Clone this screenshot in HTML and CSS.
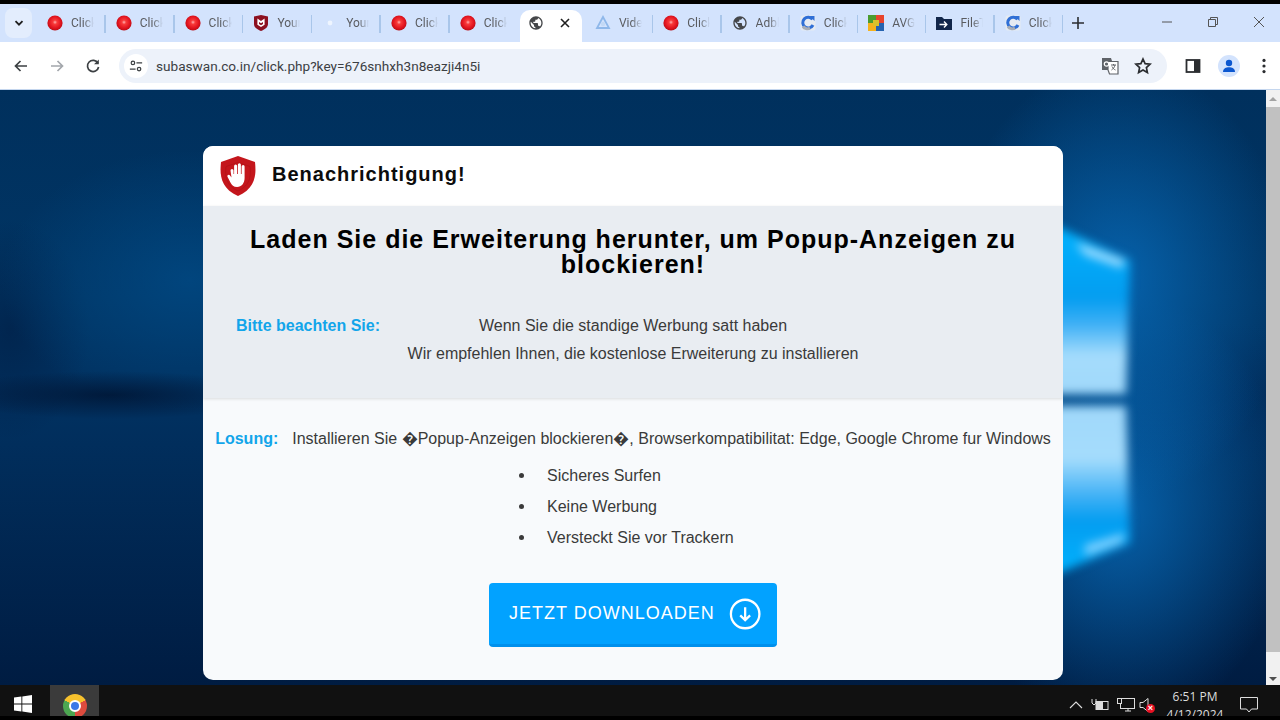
FILE: index.html
```html
<!DOCTYPE html>
<html lang="de">
<head>
<meta charset="utf-8">
<title>subaswan.co.in</title>
<link rel="stylesheet" href="styles.css">
</head>
<body>
<svg class="defs" width="0" height="0" aria-hidden="true">
  <defs>
    <radialGradient id="redball" cx="0.5" cy="0.45" r="0.55">
      <stop offset="0" stop-color="#ffb0b0"/>
      <stop offset="0.25" stop-color="#f83a3a"/>
      <stop offset="0.7" stop-color="#e2141f"/>
      <stop offset="1" stop-color="#b80d16"/>
    </radialGradient>
    <symbol id="red" viewBox="0 0 16 16"><circle cx="8" cy="8" r="7.6" fill="url(#redball)"/></symbol>
    <symbol id="globe" viewBox="0 0 24 24"><path fill="#45474a" d="M12 2C6.48 2 2 6.48 2 12s4.48 10 10 10 10-4.48 10-10S17.52 2 12 2zm-1 17.93c-3.95-.49-7-3.85-7-7.93 0-.62.08-1.21.21-1.79L9 15v1c0 1.1.9 2 2 2v1.93zm6.9-2.54c-.26-.81-1-1.39-1.9-1.39h-1v-3c0-.55-.45-1-1-1H8v-2h2c.55 0 1-.45 1-1V7h2c1.1 0 2-.9 2-2v-.41c2.93 1.19 5 4.06 5 7.41 0 2.08-.8 3.97-2.1 5.39z"/></symbol>
    <symbol id="mcafee" viewBox="0 0 16 16"><path fill="#8c1020" d="M1 1.5 8 0l7 1.5V9c0 3.5-3.5 5.6-7 7-3.5-1.4-7-3.5-7-7z"/><path fill="#fff" d="M4.4 3.6 8 6l3.6-2.4v6.2L8 12 4.4 9.8zM6 7v2l2 1.2 2-1.2V7L8 8.2z"/></symbol>
    <symbol id="dot" viewBox="0 0 16 16"><circle cx="8" cy="8" r="2.4" fill="#eef5ff"/></symbol>
    <symbol id="vid" viewBox="0 0 16 16"><path fill="none" stroke="#8fb8ea" stroke-width="1.8" d="M8 2 14 13H2z"/><circle cx="8" cy="9" r="2.2" fill="#c3d9f5"/></symbol>
    <symbol id="recap" viewBox="0 0 16 16"><rect x="0.5" y="0.5" width="15" height="15" rx="2" fill="#e6ebf2"/><path fill="none" stroke="#2f6fd6" stroke-width="3" d="M12.5 4.4A5.4 5.4 0 1 0 13 10"/><path fill="#2f6fd6" d="M9.5 1h5v5z"/><path fill="none" stroke="#a8adb5" stroke-width="3" d="M3 11.5A5.6 5.6 0 0 0 10 13.2"/></symbol>
    <symbol id="avg" viewBox="0 0 16 16"><path fill="#e8442c" d="M8 0h8v8H8z"/><path fill="#f6b21b" d="M0 8h8v8H0z"/><path fill="#4a9c2f" d="M0 0h8v8H0z"/><path fill="#2563b0" d="M8 8h8v8H8z"/><path fill="#d9c22b" d="M5 5h6v6H5z"/></symbol>
    <symbol id="file" viewBox="0 0 16 16"><path fill="#12264a" d="M0 2h6l2 2h8v11H0z"/><path fill="none" stroke="#fff" stroke-width="1.4" d="M3.5 9.5h7M8 6.6l2.8 2.9L8 12.4"/></symbol>
  </defs>
</svg>

<div class="topbar"></div>

<div class="tabstrip">
  <button class="tabmenu" type="button"><svg viewBox="0 0 12 12" width="12" height="12"><path d="M2.5 4.2 6 7.7l3.5-3.5" fill="none" stroke="#1f1f1f" stroke-width="1.8"/></svg></button>
  <div class="tabs">
    <div class="tab"><svg class="fav"><use href="#red"/></svg><span class="tabname">Click</span></div>
    <div class="tab"><svg class="fav"><use href="#red"/></svg><span class="tabname">Click</span></div>
    <div class="tab"><svg class="fav"><use href="#red"/></svg><span class="tabname">Click</span></div>
    <div class="tab"><svg class="fav"><use href="#mcafee"/></svg><span class="tabname">Your</span></div>
    <div class="tab"><svg class="fav"><use href="#dot"/></svg><span class="tabname">Your</span></div>
    <div class="tab"><svg class="fav"><use href="#red"/></svg><span class="tabname">Click</span></div>
    <div class="tab nosep"><svg class="fav"><use href="#red"/></svg><span class="tabname">Click</span></div>
    <div class="tab active"><svg class="fav"><use href="#globe"/></svg><svg class="tabclose" viewBox="0 0 10 10" width="10" height="10"><path d="M1 1l8 8M9 1 1 9" stroke="#1f1f1f" stroke-width="1.6"/></svg></div>
    <div class="tab"><svg class="fav"><use href="#vid"/></svg><span class="tabname">Video</span></div>
    <div class="tab"><svg class="fav"><use href="#red"/></svg><span class="tabname">Click</span></div>
    <div class="tab"><svg class="fav"><use href="#globe"/></svg><span class="tabname">Adbl</span></div>
    <div class="tab"><svg class="fav"><use href="#recap"/></svg><span class="tabname">Click</span></div>
    <div class="tab"><svg class="fav"><use href="#avg"/></svg><span class="tabname">AVG</span></div>
    <div class="tab"><svg class="fav"><use href="#file"/></svg><span class="tabname">FileT</span></div>
    <div class="tab"><svg class="fav"><use href="#recap"/></svg><span class="tabname">Click</span></div>
  </div>
  <svg class="newtab" viewBox="0 0 12 12" width="12" height="12"><path d="M6 0v12M0 6h12" stroke="#2b2d30" stroke-width="1.6"/></svg>
  <div class="winctl">
    <svg viewBox="0 0 12 12" width="12" height="12"><path d="M1 6h10" stroke="#555" stroke-width="1"/></svg>
    <svg viewBox="0 0 12 12" width="12" height="12"><path d="M1.5 3.5h7v7h-7zM3.5 3.5v-2h7v7h-2" fill="none" stroke="#555" stroke-width="1"/></svg>
    <svg viewBox="0 0 12 12" width="12" height="12"><path d="M1 1l10 10M11 1 1 11" stroke="#555" stroke-width="1"/></svg>
  </div>
</div>

<div class="toolbar">
  <svg class="navicon" viewBox="0 0 16 16" width="16" height="16"><path d="M14 8H2.5M7.5 3 2.5 8l5 5" fill="none" stroke="#3c4043" stroke-width="1.7"/></svg>
  <svg class="navicon" viewBox="0 0 16 16" width="16" height="16"><path d="M2 8h11.5M8.5 3l5 5-5 5" fill="none" stroke="#a3a7ac" stroke-width="1.7"/></svg>
  <svg class="navicon" viewBox="0 0 16 16" width="16" height="16"><path d="M13 5.2A5.6 5.6 0 1 0 13.6 9" fill="none" stroke="#3c4043" stroke-width="1.7"/><path d="M13.8 1.5v4.8H9z" fill="#3c4043"/></svg>
  <div class="omnibox">
    <span class="sitebtn"><svg viewBox="0 0 16 16" width="14" height="14"><circle cx="4.5" cy="4.5" r="2" fill="none" stroke="#3c4043" stroke-width="1.4"/><path d="M8.5 4.5H15M1 11.5h6.5" stroke="#3c4043" stroke-width="1.5"/><circle cx="11.5" cy="11.5" r="2" fill="none" stroke="#3c4043" stroke-width="1.4"/></svg></span>
    <span class="url">subaswan.co.in/click.php?key=676snhxh3n8eazji4n5i</span>
    <span class="omniicons">
      <svg viewBox="0 0 18 18" width="18" height="18"><path d="M1 1h9l1.2 3.4V13H1z" fill="#5f6368"/><path d="M7 4.5h10V17H8.5L7 13z" fill="#fff" stroke="#5f6368" stroke-width="1.2"/><circle cx="5.5" cy="7" r="2.2" fill="none" stroke="#fff" stroke-width="1.2"/><path d="M10 8h5M12.5 7v1.4M14 8c-.5 2.5-2 4-3.5 5M11 9.5c.7 1.5 2 3 3.5 3.5" fill="none" stroke="#5f6368" stroke-width="1"/></svg>
      <svg viewBox="0 0 18 18" width="18" height="18"><path d="M9 2l2.1 4.6 5 .6-3.7 3.4 1 4.9L9 13l-4.4 2.5 1-4.9-3.700-3.400 5-.6z" fill="none" stroke="#2b2d30" stroke-width="1.7"/></svg>
    </span>
  </div>
  <div class="tools">
    <svg viewBox="0 0 16 16" width="16" height="16"><rect x="1.5" y="2" width="13" height="12" fill="none" stroke="#2b2d30" stroke-width="1.8"/><rect x="9" y="2" width="5.5" height="12" fill="#2b2d30"/></svg>
    <span class="avatar"><svg viewBox="0 0 16 16" width="16" height="16"><circle cx="8" cy="5" r="3.2" fill="#0b57d0"/><path d="M2 14c0-3.4 3-4.8 6-4.8s6 1.4 6 4.8z" fill="#0b57d0"/></svg></span>
    <svg viewBox="0 0 4 16" width="4" height="16"><circle cx="2" cy="2.4" r="1.6" fill="#2b2d30"/><circle cx="2" cy="8" r="1.6" fill="#2b2d30"/><circle cx="2" cy="13.6" r="1.6" fill="#2b2d30"/></svg>
  </div>
</div>

<div class="viewport">
  <main class="page">
    <svg class="wall-logo" viewBox="0 0 1266 595" width="1266" height="595" aria-hidden="true">
      <defs>
        <linearGradient id="paneTop" x1="0" y1="130" x2="0" y2="304" gradientUnits="userSpaceOnUse">
          <stop offset="0" stop-color="#00b4ff"/>
          <stop offset="0.45" stop-color="#049df0"/>
          <stop offset="0.6" stop-color="#3fb0f5"/>
          <stop offset="0.78" stop-color="#a5dcfc"/>
          <stop offset="1" stop-color="#a0d8fa"/>
        </linearGradient>
        <linearGradient id="paneBot" x1="0" y1="316" x2="0" y2="490" gradientUnits="userSpaceOnUse">
          <stop offset="0" stop-color="#a0d8fa"/>
          <stop offset="0.3" stop-color="#a5dcfc"/>
          <stop offset="0.52" stop-color="#3fb0f5"/>
          <stop offset="0.66" stop-color="#049df0"/>
          <stop offset="1" stop-color="#00b4ff"/>
        </linearGradient>
      </defs>
      <polygon points="1000,110 1130,170 1126,304 1000,304" fill="url(#paneTop)"/>
      <polygon points="1000,316 1126,316 1130,453 1000,508" fill="url(#paneBot)"/>
      <polygon points="1075,152 1125,170 1122,178 1085,165" fill="#9fdcff"/>
      <polygon points="1085,455 1125,443 1122,453 1085,466" fill="#7fd0ff"/>
    </svg>
    <section class="card">
      <header class="card-head">
        <svg class="shield" viewBox="0 0 36 40" width="36" height="40">
          <path d="M18 0 35 6c1.4 13 .5 26-17 34C.5 32-.4 19 1 6z" fill="#c4161c"/>
          <path d="M18 6.5 30 10.5c.9 9.800.4 18.500-12 24.500C5.600 29 5.100 20.300 6 10.500z" fill="#c4161c" stroke="#a81015" stroke-width=".5"/>
          <path d="M10.500 14.500a1.500 1.500 0 0 1 3 0V18h.6V10a1.500 1.500 0 0 1 3 0v8h.8V8.800a1.500 1.500 0 0 1 3 0V18h.7V10.500a1.500 1.500 0 0 1 3 0V22c0 5-3 9-7.500 9-3.500 0-5.300-1.700-6.800-4.800l-2.800-5.500c-.7-1.500 1.500-2.800 2.500-1.300l1.500 2z" fill="#fff"/>
        </svg>
        <h2 class="head-title">Benachrichtigung!</h2>
      </header>
      <div class="notice">
        <h1 class="main-title">Laden Sie die Erweiterung herunter, um Popup-Anzeigen zu blockieren!</h1>
        <div class="notice-row">
          <strong class="label">Bitte beachten Sie:</strong>
          <span class="notice-text">Wenn Sie die standige Werbung satt haben</span>
        </div>
        <p class="notice-line">Wir empfehlen Ihnen, die kostenlose Erweiterung zu installieren</p>
      </div>
      <div class="solution">
        <p class="solution-row"><strong class="label">Losung:</strong><span>Installieren Sie �Popup-Anzeigen blockieren�, Browserkompatibilitat: Edge, Google Chrome fur Windows</span></p>
        <ul class="features">
          <li>Sicheres Surfen</li>
          <li>Keine Werbung</li>
          <li>Versteckt Sie vor Trackern</li>
        </ul>
        <a class="download" href="#">JETZT DOWNLOADEN
          <svg viewBox="0 0 34 34" width="34" height="34"><circle cx="17" cy="17" r="15" fill="none" stroke="#fff" stroke-width="2.4"/><path d="M17 10v13M11.800 18.500 17 23.500l5.200-5" fill="none" stroke="#fff" stroke-width="2.400"/></svg>
        </a>
      </div>
    </section>
  </main>
  <div class="scrollbar">
    <div class="sb-btn"><span class="arrow-up"></span></div>
    <div class="sb-thumb"></div>
    <div class="sb-btn sb-end"><span class="arrow-down"></span></div>
  </div>
</div>

<footer class="taskbar">
  <svg class="winlogo" viewBox="0 0 18 18" width="18" height="18"><path fill="#fff" d="M0 2.600 7.400 1.500V8.500H0zM8.300 1.400 18 0V8.500H8.300zM0 9.400H7.400V16.500L0 15.400zM8.300 9.400H18V18L8.300 16.600z"/></svg>
  <div class="task-chrome">
    <span class="chrome-logo"><span class="chrome-eye"></span></span>
  </div>
  <div class="tray">
    <svg viewBox="0 0 14 8" width="14" height="8"><path d="M1 7 7 1l6 6" fill="none" stroke="#ddd" stroke-width="1.100"/></svg>
    <svg viewBox="0 0 18 14" width="18" height="14"><rect x="5" y="3.500" width="12" height="8" fill="none" stroke="#ddd"/><rect x="5" y="3.500" width="7" height="8" fill="#ddd"/><path d="M1 1v4l2 2 2-2V1" fill="none" stroke="#ddd"/></svg>
    <svg viewBox="0 0 18 16" width="18" height="16"><rect x="3.500" y="1.500" width="14" height="10" fill="none" stroke="#ddd"/><path d="M8 14h6M11 11.500V14" stroke="#ddd"/><rect x="0.500" y="1.500" width="4" height="5" fill="#111" stroke="#ddd"/></svg>
    <span class="sound">
      <svg viewBox="0 0 12 16" width="12" height="16"><path d="M1 5.500h3L9 1.500v13L4 10.500H1z" fill="none" stroke="#ddd"/></svg>
      <span class="mute">×</span>
    </span>
  </div>
  <div class="clock"><span>6:51 PM</span><span>4/12/2024</span></div>
  <svg class="notif" viewBox="0 0 18 16" width="18" height="16"><path d="M.5.500h17V12h-6L9 15 6.500 12h-6z" fill="none" stroke="#ddd"/></svg>
</footer>
<div class="bottombar"></div>
</body>
</html>
```
FILE: styles.css
```css
* { box-sizing: border-box; }
html, body { margin: 0; height: 720px; overflow: hidden; }
body {
  display: flex;
  flex-direction: column;
  width: 1280px;
  background: #000;
  font-family: "Liberation Sans", Arial, sans-serif;
}
.defs { position: absolute; }
.topbar { height: 4px; background: #000; flex: none; }

/* tab strip */
.tabstrip {
  height: 38px;
  flex: none;
  display: flex;
  align-items: flex-end;
  background: #d3e3fd;
  padding-left: 5px;
}
.tabmenu {
  width: 27px;
  height: 30px;
  margin-bottom: 4px;
  padding: 0;
  border: 0;
  border-radius: 8px;
  background: #e3edfd;
  display: flex;
  align-items: center;
  justify-content: center;
}
.tabs { display: flex; margin-left: 5px; width: 1029px; }
.tab {
  position: relative;
  width: 68.8px;
  height: 32px;
  flex: none;
  display: flex;
  align-items: center;
  gap: 8px;
  padding: 0 0 6px 10px;
}
.tab.active ~ .tab { width: 68.3px; }
.tab::after {
  content: "";
  position: absolute;
  right: 0;
  top: 5px;
  width: 1.5px;
  height: 18px;
  background: #a9c6ea;
}
.tab.nosep::after, .tab.active::after { display: none; }
.tab.active {
  background: #fff;
  border-radius: 10px 10px 0 0;
  width: 62px;
  margin: 0 3px 0 1.4px;
  gap: 0;
  padding-left: 8px;
  justify-content: flex-start;
}
.fav { width: 16px; height: 16px; flex: none; }
.tabclose { margin-left: 16px; }
.tabname {
  width: 23px;
  overflow: hidden;
  white-space: nowrap;
  font: 12px Roboto, "Liberation Sans", sans-serif;
  color: #5a5c60;
  -webkit-mask-image: linear-gradient(90deg, #000 55%, transparent 100%);
  mask-image: linear-gradient(90deg, #000 55%, transparent 100%);
}
.newtab { margin: 0 0 13px 6px; flex: none; }
.winctl {
  display: flex;
  gap: 34px;
  margin-left: auto;
  margin-bottom: 14px;
  padding-right: 15px;
}

/* toolbar */
.toolbar {
  height: 48px;
  flex: none;
  display: flex;
  align-items: center;
  background: #fff;
  padding: 0 0 0 13px;
  border-bottom: 1px solid #c4d6ee;
}
.navicon { margin-right: 20px; flex: none; }
.navicon:nth-of-type(3) { margin-right: 18px; }
.omnibox {
  width: 1048px;
  height: 34px;
  flex: none;
  display: flex;
  align-items: center;
  border-radius: 17px;
  background: #edf2fa;
  padding: 0 15px 0 5px;
}
.sitebtn {
  width: 24px;
  height: 24px;
  flex: none;
  border-radius: 50%;
  background: #fff;
  display: flex;
  align-items: center;
  justify-content: center;
}
.url {
  margin-left: 8px;
  font: 13.6px Roboto, "Liberation Sans", sans-serif;
  color: #3c4043;
}
.omniicons { margin-left: auto; display: flex; gap: 15px; align-items: center; }
.tools { display: flex; align-items: center; margin-left: 18px; }
.avatar {
  width: 22px;
  height: 22px;
  margin: 0 22px 0 17px;
  border-radius: 50%;
  background: #d3e3fd;
  display: flex;
  align-items: center;
  justify-content: center;
}

/* viewport */
.viewport { height: 595px; flex: none; display: flex; }
.page {
  position: relative;
  flex: 1;
  overflow: hidden;
  padding-top: 56px;
  background:
    radial-gradient(ellipse 170px 24px at 110px 305px, rgba(0, 16, 44, .7), transparent),
    radial-gradient(ellipse 190px 130px at 190px 190px, rgba(1, 72, 130, .85), transparent),
    radial-gradient(ellipse 80px 110px at 10px 240px, rgba(0, 20, 55, .45), transparent),
    radial-gradient(ellipse 170px 220px at 1120px 190px, rgba(6, 100, 175, .95), transparent),
    radial-gradient(ellipse 170px 220px at 1120px 420px, rgba(6, 100, 175, .95), transparent),
    radial-gradient(ellipse 120px 80px at 1215px 310px, rgba(0, 44, 92, .8), transparent),
    linear-gradient(180deg, #00305d 0%, #013564 35%, #01305f 55%, #001c42 100%);
}
.page > .card { position: relative; }
.wall-logo {
  position: absolute;
  left: 0;
  top: 0;
  filter: blur(5px);
}

/* card */
.card {
  width: 860px;
  height: 534px;
  margin: 0 auto;
  border-radius: 10px;
  overflow: hidden;
  background: #f8fafc;
  display: flex;
  flex-direction: column;
}
.card-head {
  height: 60px;
  flex: none;
  display: flex;
  align-items: center;
  gap: 16px;
  padding: 0 0 0 17px;
  background: #fff;
  box-shadow: 0 1px 3px rgba(0, 0, 0, .18);
  position: relative;
}
.shield { flex: none; }
.head-title {
  margin: -3px 0 0;
  font-size: 20px;
  font-weight: 700;
  letter-spacing: 1px;
  color: #0c0c0c;
}
.notice {
  height: 192px;
  flex: none;
  padding: 21px 30px 0;
  background: #e9edf2;
  box-shadow: 0 1px 3px rgba(0, 0, 0, .12);
  position: relative;
}
.main-title {
  margin: 0;
  font-size: 25px;
  line-height: 25px;
  font-weight: 700;
  letter-spacing: 1px;
  text-align: center;
  color: #000;
}
.notice-row {
  display: grid;
  grid-template-columns: 1fr auto 1fr;
  margin: 38px 0 0;
  line-height: 22px;
}
.label {
  font-size: 16px;
  font-weight: 700;
  color: #12a5ea;
}
.notice-row .label { padding-left: 3px; }
.notice-text, .notice-line, .solution-row, .features {
  font-size: 16px;
  color: #3a3a3a;
}
.notice-line { margin: 6px 0 0; line-height: 22px; text-align: center; }
.solution {
  flex: 1;
  display: flex;
  flex-direction: column;
  align-items: center;
  padding-top: 29px;
}
.solution-row {
  margin: 0;
  line-height: 24px;
  white-space: nowrap;
  display: flex;
  gap: 14px;
}
.features {
  margin: 9px 0 0;
  padding: 0;
  width: 228px;
  list-style: none;
}
.features li {
  height: 31px;
  line-height: 31px;
  display: flex;
  align-items: center;
  gap: 23px;
}
.features li::before {
  content: "";
  width: 5px;
  height: 5px;
  border-radius: 50%;
  background: #3a3a3a;
  flex: none;
}
.download {
  width: 288px;
  height: 64px;
  margin-top: 30px;
  display: flex;
  align-items: center;
  gap: 14px;
  padding: 0 16px 0 20px;
  border-radius: 4px;
  border-bottom: 3px solid #0090ec;
  background: #02a2ff;
  color: #fff;
  font-size: 18px;
  letter-spacing: 1px;
  text-decoration: none;
  white-space: nowrap;
}

/* scrollbar */
.scrollbar {
  width: 14px;
  flex: none;
  display: flex;
  flex-direction: column;
  background: #f1f1f1;
}
.sb-btn {
  height: 17px;
  flex: none;
  display: flex;
  align-items: center;
  justify-content: center;
  background: #f1f1f1;
}
.sb-end { height: 33px; align-items: flex-end; padding-bottom: 4px; }
.sb-thumb { flex: 1; background: #c1c1c1; }
.arrow-up {
  border-left: 4px solid transparent;
  border-right: 4px solid transparent;
  border-bottom: 4px solid #a3a3a3;
}
.arrow-down {
  border-left: 4px solid transparent;
  border-right: 4px solid transparent;
  border-top: 4px solid #505050;
}

/* taskbar */
.taskbar {
  height: 31px;
  flex: none;
  display: flex;
  align-items: center;
  background: #111;
  overflow: hidden;
  color: #ddd;
  font-family: "Open Sans", "Liberation Sans", sans-serif;
}
.winlogo { margin: 7px 0 0 14px; flex: none; }
.task-chrome {
  width: 49px;
  height: 31px;
  margin-left: 18px;
  flex: none;
  background: #3b3b3b;
  display: flex;
  align-items: center;
  justify-content: center;
}
.chrome-logo {
  width: 24px;
  height: 24px;
  margin-top: 11px;
  border-radius: 50%;
  background: conic-gradient(from 60deg, #dd4b3e 0 120deg, #4ca651 120deg 240deg, #f6c12d 240deg 360deg);
  display: flex;
  align-items: center;
  justify-content: center;
  flex: none;
}
.chrome-eye {
  width: 12px;
  height: 12px;
  border-radius: 50%;
  background: #3b78e7;
  border: 2px solid #fff;
}
.tray {
  margin-left: auto;
  display: flex;
  align-items: center;
  gap: 8px;
  margin-top: 8px;
}
.sound { position: relative; display: flex; margin-left: -4px; }
.mute {
  position: absolute;
  left: 7px;
  top: 7px;
  width: 9px;
  height: 9px;
  border-radius: 50%;
  background: #e81123;
  color: #fff;
  font: 700 9px/9px "Liberation Sans", sans-serif;
  text-align: center;
}
.clock {
  width: 62px;
  margin-left: 13px;
  display: flex;
  flex-direction: column;
  align-items: center;
  align-self: flex-start;
  padding-top: 3px;
  font-size: 12px;
  line-height: 18px;
  flex: none;
  white-space: nowrap;
}
.notif { margin: 8px 22px 0 14px; flex: none; }
.bottombar { flex: 1; background: #000; }
```
